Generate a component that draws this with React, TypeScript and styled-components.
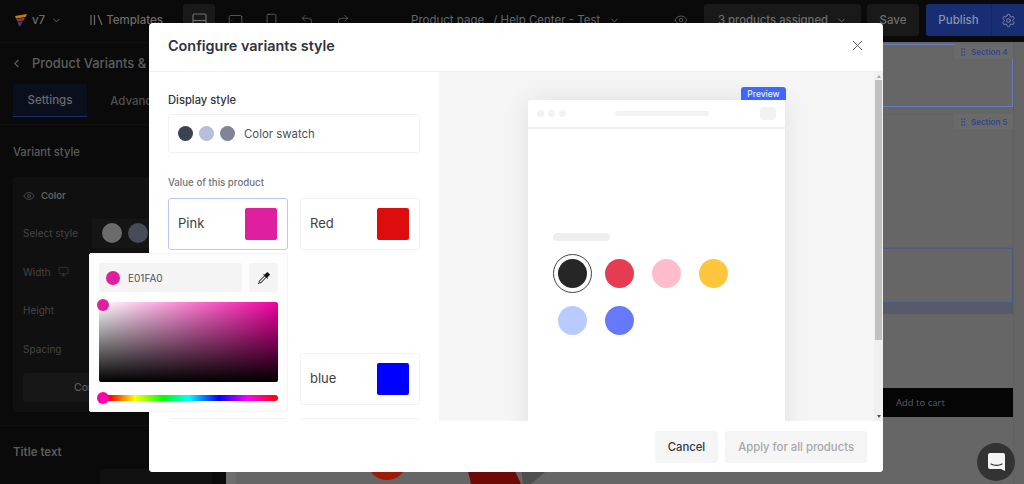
import React from "react";
import styled, { createGlobalStyle } from "styled-components";
import { ChevronDown, ChevronLeft, Eye, Monitor, Tablet, Smartphone, Undo2, Redo2, Settings, X, GripVertical } from "lucide-react";
import { BsEyedropper } from "react-icons/bs";

const Global = createGlobalStyle`
  html, body { margin: 0; padding: 0; width: 1024px; height: 484px; overflow: hidden; background: #0a0a0a; }
  body { font-family: Inter, "Liberation Sans", sans-serif; }
  * { box-sizing: border-box; }
`;

const Page = styled.div`
  position: relative;
  width: 1024px;
  height: 484px;
  display: flex;
  flex-direction: column;
  overflow: hidden;
  background: #666;
`;

/* ---------- dimmed editor behind the dialog ---------- */
const TopBar = styled.header`
  height: 42px;
  flex: none;
  background: #0a0a0a;
  display: flex;
  align-items: center;
  padding: 4px 0 6px;
  color: #6c6c6c;
  font-size: 11.5px;
  font-weight: 500;
  white-space: nowrap;
`;
const Logo = styled.svg`
  width: 14px;
  height: 14px;
  margin-left: 14px;
`;
const Version = styled.span`
  display: flex;
  align-items: center;
  gap: 6px;
  margin-left: 4px;
`;
const Templates = styled.span`
  display: flex;
  align-items: center;
  gap: 3px;
  margin-left: 28px;
`;
const DeviceIcon = styled.span<{ $on?: boolean }>`
  width: 32px;
  height: 32px;
  display: flex;
  align-items: center;
  justify-content: center;
  border-radius: 3px;
  background: ${(p) => (p.$on ? "#191919" : "transparent")};
`;
const Devices = styled.div`
  display: flex;
  gap: 4px;
  margin-left: 20px;
`;
const Breadcrumb = styled.span`
  display: flex;
  align-items: center;
  gap: 9px;
  margin-left: 52px;
  color: #5f6870;
  font-weight: 400;
  font-size: 11.5px;
`;
const PreviewEye = styled.span`
  margin-left: auto;
  margin-right: 16px;
  display: flex;
  align-items: center;
`;
const Assign = styled.div`
  width: 157px;
  height: 32px;
  background: #191919;
  border-radius: 3px;
  display: flex;
  align-items: center;
  justify-content: space-between;
  padding: 0 14px;
  font-size: 11.3px;
`;
const SaveBtn = styled.div`
  width: 52px;
  height: 32px;
  margin-left: 6px;
  background: #191919;
  border-radius: 3px;
  display: flex;
  align-items: center;
  justify-content: center;
`;
const PublishBtn = styled.div`
  width: 98px;
  height: 32px;
  margin-left: 7px;
  background: #182d72;
  border-radius: 3px 0 0 3px;
  display: flex;
  color: #8a93ad;
`;
const PublishLabel = styled.span`
  flex: 1;
  display: flex;
  align-items: center;
  justify-content: center;
  border-right: 1px solid #16286a;
`;
const PublishGear = styled.span`
  width: 32px;
  display: flex;
  align-items: center;
  justify-content: center;
  flex: none;
`;
const Body = styled.div`
  flex: 1;
  display: flex;
  min-height: 0;
`;
const Sidebar = styled.aside`
  width: 226px;
  flex: none;
  background: #0a0a0a;
  border-top: 1px solid #111;
  color: #5c5c5c;
  display: flex;
  flex-direction: column;
`;
const SideTitle = styled.div`
  height: 41px;
  flex: none;
  display: flex;
  align-items: center;
  gap: 9px;
  padding-left: 10px;
  font-size: 12.9px;
  font-weight: 500;
  color: #5f5f5f;
  white-space: nowrap;
  overflow: hidden;
`;
const Tabs = styled.div`
  height: 33px;
  flex: none;
  display: flex;
  margin: 0 0 7px;
  font-size: 11.5px;
  font-weight: 500;
  padding-left: 13px;
`;
const TabItem = styled.div<{ $on?: boolean }>`
  width: 74px;
  display: flex;
  align-items: center;
  justify-content: center;
  background: ${(p) => (p.$on ? "#0a0f1d" : "transparent")};
  border-bottom: ${(p) => (p.$on ? "1px solid #182d72" : "none")};
  color: ${(p) => (p.$on ? "#6c6c6c" : "#505050")};
  margin-right: 14px;
  flex: none;
`;
const SideHeading = styled.div`
  padding: 20px 13px 0;
  height: 53px;
  font-size: 11.2px;
  font-weight: 500;
  color: #5c5c5c;
  border-top: 1px solid #101010;
  flex: none;
`;
const Panel = styled.div`
  margin: 0 13px;
  height: 235px;
  flex: none;
  background: #101010;
  border-radius: 3px;
  padding: 0 10px;
  display: flex;
  flex-direction: column;
`;
const PanelHead = styled.div`
  height: 37px;
  flex: none;
  display: flex;
  align-items: center;
  gap: 6px;
  font-size: 9.5px;
  font-weight: 600;
  color: #626262;
`;
const PanelRow = styled.div`
  height: 38.5px;
  flex: none;
  display: flex;
  align-items: center;
  gap: 7px;
  font-size: 10px;
  color: #454545;
`;
const StylePick = styled.div`
  margin-left: 7px;
  width: 100px;
  height: 29px;
  background: #151515;
  display: flex;
  align-items: center;
  padding: 0 10px;
  gap: 6px;
`;
const Dot = styled.span<{ $c: string }>`
  width: 20px;
  height: 20px;
  border-radius: 50%;
  background: ${(p) => p.$c};
  flex: none;
`;
const ConfBtn = styled.div`
  margin-top: 5px;
  height: 29px;
  flex: none;
  background: #171717;
  border-radius: 3px;
  display: flex;
  align-items: center;
  padding-left: 51px;
  font-size: 10.5px;
  font-weight: 500;
  color: #5c5c5c;
`;
const SideHeading2 = styled.div`
  margin-top: 13px;
  border-top: 1px solid #111;
  padding: 19px 13px 0;
  font-size: 11.5px;
  font-weight: 600;
  color: #5c5c5c;
  flex: none;
`;
const SideInput = styled.div`
  margin: 10px 14px 0 100px;
  height: 20px;
  background: #111;
  border-radius: 2px;
  flex: none;
`;
const Canvas = styled.main`
  flex: 1;
  min-width: 0;
  position: relative;
  background: #666;
  border-left: 10px solid #6e6e6e;
  overflow: hidden;
`;
const Gutter = styled.div`
  position: absolute;
  top: 0;
  bottom: 0;
  right: 0;
  width: 11px;
  background: #646464;
  border-left: 1px solid #606060;
`;
const SectionBox = styled.div<{ $top: number; $h: number; $c: string }>`
  position: absolute;
  right: 11px;
  left: 0;
  top: ${(p) => p.$top}px;
  height: ${(p) => p.$h}px;
  border: 1px solid ${(p) => p.$c};
`;
const SectionTag = styled.div`
  position: absolute;
  right: -1px;
  top: -1px;
  width: 59px;
  height: 15px;
  background: #6a6a6a;
  color: #33458f;
  font-size: 8px;
  font-weight: 600;
  display: flex;
  align-items: center;
  gap: 3px;
  padding-left: 4px;
  white-space: nowrap;
`;
const Strip = styled.div`
  position: absolute;
  left: 0;
  right: 11px;
  top: 261px;
  height: 11px;
  background: #565a69;
`;
const CartBar = styled.div`
  position: absolute;
  left: 0;
  right: 11px;
  top: 346px;
  height: 29px;
  background: #050505;
  color: #5e5e5e;
  font-family: "Open Sans", sans-serif;
  font-size: 9.5px;
  display: flex;
  align-items: center;
  padding-left: 660px;
  white-space: nowrap;
`;
const RedBlob = styled.div`
  position: absolute;
  left: 131px;
  top: 398px;
  width: 40px;
  height: 40px;
  border-radius: 50%;
  background: #a01a08;
`;
const ProductArt = styled.svg`
  position: absolute;
  left: 225px;
  top: 425px;
  width: 110px;
  height: 17px;
`;

/* ---------- dialog ---------- */
const Dialog = styled.section`
  position: absolute;
  left: 149px;
  top: 23px;
  width: 734px;
  height: 449px;
  background: #fff;
  border-radius: 4px;
  display: flex;
  flex-direction: column;
  overflow: hidden;
`;
const DialogHead = styled.div`
  height: 49px;
  flex: none;
  display: flex;
  align-items: center;
  justify-content: space-between;
  padding: 0 17px 3px 19px;
  border-bottom: 1px solid #f0f0f0;
  color: #444;
`;
const DialogTitle = styled.h2`
  margin: 0;
  font-size: 14.4px;
  font-weight: 600;
  color: #30343c;
`;
const DialogMain = styled.div`
  flex: 1;
  min-height: 0;
  display: flex;
`;
const LeftPane = styled.div`
  width: 290px;
  flex: none;
  padding: 20.5px 19px 0;
  overflow: hidden;
  display: flex;
  flex-direction: column;
`;
const PaneLabel = styled.div`
  font-size: 11.2px;
  font-weight: 500;
  color: #30343c;
  line-height: 15px;
`;
const DisplayCard = styled.div`
  margin-top: 6.5px;
  height: 39px;
  border: 1px solid #f2f2f2;
  border-radius: 3px;
  display: flex;
  align-items: center;
  padding: 0 9px;
  gap: 6px;
  flex: none;
`;
const Swatch = styled.span<{ $c: string }>`
  width: 15px;
  height: 15px;
  border-radius: 50%;
  background: ${(p) => p.$c};
  flex: none;
`;
const DisplayText = styled.span`
  margin-left: 3px;
  font-size: 11.4px;
  color: #4d5159;
`;
const SubLabel = styled.div`
  margin-top: 23px;
  font-size: 9.7px;
  font-weight: 500;
  line-height: 14px;
  color: #6f737b;
`;
const ValueGrid = styled.div`
  margin-top: 8px;
  display: grid;
  grid-template-columns: 119.5px 119.5px;
  column-gap: 12.5px;
  row-gap: 13px;
  grid-template-rows: 52px 77px 52px 52px;
`;
const ValueCard = styled.div<{ $on?: boolean; $gap?: boolean }>`
  border: 1px solid ${(p) => (p.$on ? "#b8c8ff" : "#f3f3f3")};
  border-radius: 3px;
  display: flex;
  align-items: center;
  justify-content: space-between;
  padding: 0 9.5px 0 9px;
  font-size: 13px;
  color: #3b4048;
  visibility: ${(p) => (p.$gap ? "hidden" : "visible")};
`;
const ValueName = styled.span`
  margin-bottom: 2px;
`;
const ColorChip = styled.span<{ $c: string }>`
  width: 32px;
  height: 32px;
  border-radius: 2px;
  background: ${(p) => p.$c};
  flex: none;
`;
const RightPane = styled.div`
  flex: 1;
  min-width: 0;
  background: #f5f5f5;
  position: relative;
  overflow: hidden;
  display: flex;
  justify-content: center;
  padding: 28px 0 0 0;
`;
const ScrollTrack = styled.div`
  position: absolute;
  right: 0;
  top: 0;
  bottom: 0;
  width: 9px;
  background: #f0f0f0;
  display: flex;
  flex-direction: column;
  align-items: center;
`;
const ScrollArrow = styled.div<{ $down?: boolean }>`
  flex: none;
  width: 0;
  height: 0;
  margin: ${(p) => (p.$down ? "3px 0 3px" : "3px 0 2px")};
  border-left: 2.5px solid transparent;
  border-right: 2.5px solid transparent;
  ${(p) => (p.$down ? "border-top: 3px solid #555;" : "border-bottom: 3px solid #a8a8a8;")}
`;
const ScrollThumb = styled.div`
  width: 7px;
  height: 260px;
  flex: none;
  background: #c1c1c1;
`;
const ScrollFill = styled.div`
  flex: 1;
`;
const PreviewWrap = styled.div`
  position: relative;
  width: 257px;
  height: 400px;
  margin-left: -9px;
  flex: none;
`;
const PreviewBadge = styled.div`
  position: absolute;
  right: -1px;
  top: -13px;
  width: 45px;
  height: 13px;
  background: #3d67ff;
  border-radius: 3px 3px 0 0;
  color: #e8edff;
  font-size: 8.5px;
  font-weight: 500;
  display: flex;
  align-items: center;
  justify-content: center;
`;
const Browser = styled.div`
  width: 100%;
  height: 100%;
  background: #fff;
  box-shadow: 0 0 24px rgba(0, 0, 0, 0.09);
  border-radius: 2px 2px 0 0;
  display: flex;
  flex-direction: column;
`;
const BrowserBar = styled.div`
  height: 29px;
  flex: none;
  border-bottom: 2px solid #f0f0f0;
  display: flex;
  align-items: center;
  padding: 0 9px 0 9px;
  gap: 4px;
`;
const Light = styled.span`
  width: 7px;
  height: 7px;
  border-radius: 50%;
  background: #f2f2f2;
`;
const AddressBar = styled.span`
  width: 94px;
  height: 5px;
  border-radius: 3px;
  background: #f2f2f2;
  margin-left: 45px;
`;
const BarButton = styled.span`
  width: 16px;
  height: 13px;
  border-radius: 3px;
  background: #f2f2f2;
  margin-left: auto;
`;
const BrowserBody = styled.div`
  padding: 104px 0 0 25px;
`;
const Skeleton = styled.div`
  width: 57px;
  height: 8px;
  border-radius: 4px;
  background: #eeeeee;
`;
const OptionGrid = styled.div`
  margin-top: 18px;
  margin-left: 5px;
  display: grid;
  grid-template-columns: repeat(4, 29px);
  grid-auto-rows: 29px;
  column-gap: 18px;
  row-gap: 18px;
`;
const Option = styled.span<{ $c: string; $on?: boolean }>`
  width: 29px;
  height: 29px;
  border-radius: 50%;
  background: ${(p) => p.$c};
  position: relative;
  ${(p) =>
    p.$on
      ? `&::after { content: ""; position: absolute; inset: -5px; border-radius: 50%; border: 1.5px solid #444; }`
      : ""}
`;
const Footer = styled.div`
  height: 51px;
  flex: none;
  display: flex;
  justify-content: flex-end;
  align-items: center;
  gap: 7px;
  padding: 0 16px 0 0;
  background: #fff;
`;
const FootBtn = styled.div<{ $off?: boolean }>`
  height: 32px;
  padding: 0 ${(p) => (p.$off ? "13px" : "13px")};
  border-radius: 3px;
  background: #f5f5f5;
  display: flex;
  align-items: center;
  font-size: 11.3px;
  font-weight: 500;
  color: ${(p) => (p.$off ? "#a8a8a8" : "#33373e")};
`;

/* ---------- colour picker popover ---------- */
const Picker = styled.div`
  position: absolute;
  left: 89px;
  top: 253px;
  width: 199px;
  height: 159px;
  background: #fdfdfd;
  border: 1px solid #f4f4f4;
  border-radius: 2px;
  padding: 9px 9px 0;
  display: flex;
  flex-direction: column;
`;
const PickerTop = styled.div`
  display: flex;
  gap: 7px;
  height: 29px;
  flex: none;
`;
const HexField = styled.div`
  flex: 1;
  background: #f4f4f4;
  border-radius: 2px;
  display: flex;
  align-items: center;
  gap: 8px;
  padding-left: 7px;
  font-size: 10px;
  font-weight: 400;
  color: #4d5159;
`;
const HexDot = styled.span`
  width: 14px;
  height: 14px;
  border-radius: 50%;
  background: #e01fa0;
`;
const EyeDrop = styled.div`
  width: 29px;
  background: #f4f4f4;
  border-radius: 2px;
  display: flex;
  align-items: center;
  justify-content: center;
  color: #111;
`;
const Saturation = styled.div`
  position: relative;
  margin-top: 10px;
  height: 80px;
  flex: none;
  border-radius: 2px;
  background: linear-gradient(to top, #000, rgba(0, 0, 0, 0)),
    linear-gradient(to right, #fff, #f000a0);
`;
const Thumb = styled.span<{ $c: string }>`
  position: absolute;
  left: -2.5px;
  top: 50%;
  width: 12px;
  height: 12px;
  margin-top: -6px;
  border-radius: 50%;
  background: ${(p) => p.$c};
`;
const SatThumb = styled(Thumb)`
  top: 3px;
`;
const Hue = styled.div`
  position: relative;
  margin-top: 13px;
  height: 6px;
  flex: none;
  border-radius: 3px;
  background: linear-gradient(
    to right,
    #ff00a8 0%,
    #ff0000 6%,
    #ffff00 20%,
    #00ff00 36%,
    #00ffff 50%,
    #0000ff 67%,
    #ff00ff 83%,
    #ff0000 100%
  );
`;

/* ---------- chat launcher ---------- */
const Chat = styled.div`
  position: absolute;
  right: 9px;
  top: 443px;
  width: 38px;
  height: 38px;
  border-radius: 50%;
  background: #333;
  display: flex;
  align-items: center;
  justify-content: center;
`;

const values = [
  { name: "Pink", color: "#e01fa0", on: true },
  { name: "Red", color: "#dd0d0d" },
  { name: "", color: "", gap: true },
  { name: "", color: "", gap: true },
  { name: "", color: "", gap: true },
  { name: "blue", color: "#0000ff" },
  { name: "", color: "" },
  { name: "", color: "" },
];

const options = [
  { c: "#262626", on: true },
  { c: "#e63c52" },
  { c: "#ffbccd" },
  { c: "#ffc53d" },
  { c: "#b8caff" },
  { c: "#6679fb" },
];

export default function App() {
  return (
    <Page>
      <Global />
      <TopBar>
        <Logo viewBox="0 0 14 14">
          <path d="M1 3 L13 1 L11.5 4 L2 5.5 Z" fill="#b5850f" />
          <path d="M2.4 6 L11 4.8 L9.5 7.6 L3.2 8.5 Z" fill="#a83524" />
          <path d="M3.6 9 L8.8 8.2 L6.5 13 L5 13 Z" fill="#3a3c90" />
        </Logo>
        <Version>
          v7 <ChevronDown size={11} />
        </Version>
        <Templates>
          <svg width="13" height="12" viewBox="0 0 13 12" fill="none" stroke="#6c6c6c" strokeWidth="1.2">
            <path d="M1 1v10M4.5 1v10M8 1l4 10" />
          </svg>
          Templates
        </Templates>
        <Devices>
          <DeviceIcon $on>
            <svg width="15" height="15" viewBox="0 0 15 15" fill="none" stroke="#6c6c6c" strokeWidth="1.2">
              <rect x="1" y="1" width="13" height="13" rx="1.5" />
              <path d="M1 7.5h13" />
            </svg>
          </DeviceIcon>
          <DeviceIcon>
            <Tablet size={15} strokeWidth={1.2} style={{ transform: "rotate(90deg)" }} />
          </DeviceIcon>
          <DeviceIcon>
            <Smartphone size={15} strokeWidth={1.2} />
          </DeviceIcon>
          <DeviceIcon>
            <Undo2 size={14} strokeWidth={1.2} />
          </DeviceIcon>
          <DeviceIcon>
            <Redo2 size={14} strokeWidth={1.2} />
          </DeviceIcon>
        </Devices>
        <Breadcrumb>
          Product page
          <span>/ Help Center - Test</span>
          <ChevronDown size={11} />
        </Breadcrumb>
        <PreviewEye>
          <Eye size={14} strokeWidth={1.3} />
        </PreviewEye>
        <Assign>
          3 products assigned <ChevronDown size={11} />
        </Assign>
        <SaveBtn>Save</SaveBtn>
        <PublishBtn>
          <PublishLabel>Publish</PublishLabel>
          <PublishGear>
            <Settings size={15} strokeWidth={1.4} />
          </PublishGear>
        </PublishBtn>
      </TopBar>
      <Body>
        <Sidebar>
          <SideTitle>
            <ChevronLeft size={13} />
            Product Variants &amp; Swatches
          </SideTitle>
          <Tabs>
            <TabItem $on>Settings</TabItem>
            <TabItem>Advanced</TabItem>
          </Tabs>
          <SideHeading>Variant style</SideHeading>
          <Panel>
            <PanelHead>
              <Eye size={12} strokeWidth={1.3} />
              Color
            </PanelHead>
            <PanelRow>
              Select style
              <StylePick>
                <Dot $c="#6b6b6b" />
                <Dot $c="#484c58" />
              </StylePick>
            </PanelRow>
            <PanelRow>
              Width <Monitor size={11} strokeWidth={1.3} />
            </PanelRow>
            <PanelRow>Height</PanelRow>
            <PanelRow>Spacing</PanelRow>
            <ConfBtn>Configure</ConfBtn>
          </Panel>
          <SideHeading2>Title text</SideHeading2>
          <SideInput />
        </Sidebar>
        <Canvas>
          <SectionBox $top={2} $h={63} $c="#6a7cc0">
            <SectionTag>
              <GripVertical size={10} strokeWidth={2} />
              Section 4
            </SectionTag>
          </SectionBox>
          <SectionBox $top={72} $h={134} $c="#626262">
            <SectionTag>
              <GripVertical size={10} strokeWidth={2} />
              Section 5
            </SectionTag>
          </SectionBox>
          <SectionBox $top={206} $h={55} $c="#4d5a84" />
          <Strip />
          <CartBar>Add to cart</CartBar>
          <RedBlob />
          <ProductArt viewBox="0 0 110 17">
            <path d="M6 0 H52 L60 17 H10 Z" fill="#6e0a05" />
            <path d="M18 5 L26 0 H18 Z" fill="#8a8a8a" />
            <path d="M60 0 H90 L70 17 H62 Z" fill="#4f4f4f" />
          </ProductArt>
          <Gutter />
        </Canvas>
      </Body>

      <Dialog>
        <DialogHead>
          <DialogTitle>Configure variants style</DialogTitle>
          <X size={17} strokeWidth={1.2} />
        </DialogHead>
        <DialogMain>
          <LeftPane>
            <PaneLabel>Display style</PaneLabel>
            <DisplayCard>
              <Swatch $c="#3d4250" />
              <Swatch $c="#b6bfd9" />
              <Swatch $c="#7f8499" />
              <DisplayText>Color swatch</DisplayText>
            </DisplayCard>
            <SubLabel>Value of this product</SubLabel>
            <ValueGrid>
              {values.map((v, i) =>
                v.gap ? (
                  <ValueCard key={i} $gap />
                ) : (
                  <ValueCard key={i} $on={v.on}>
                    <ValueName>{v.name}</ValueName>
                    {v.color && <ColorChip $c={v.color} />}
                  </ValueCard>
                )
              )}
            </ValueGrid>
          </LeftPane>
          <RightPane>
            <PreviewWrap>
              <PreviewBadge>Preview</PreviewBadge>
              <Browser>
                <BrowserBar>
                  <Light />
                  <Light />
                  <Light />
                  <AddressBar />
                  <BarButton />
                </BrowserBar>
                <BrowserBody>
                  <Skeleton />
                  <OptionGrid>
                    {options.map((o) => (
                      <Option key={o.c} $c={o.c} $on={o.on} />
                    ))}
                  </OptionGrid>
                </BrowserBody>
              </Browser>
            </PreviewWrap>
            <ScrollTrack>
              <ScrollArrow />
              <ScrollThumb />
              <ScrollFill />
              <ScrollArrow $down />
            </ScrollTrack>
          </RightPane>
        </DialogMain>
        <Footer>
          <FootBtn>Cancel</FootBtn>
          <FootBtn $off>Apply for all products</FootBtn>
        </Footer>
      </Dialog>

      <Picker>
        <PickerTop>
          <HexField>
            <HexDot />
            E01FA0
          </HexField>
          <EyeDrop>
            <BsEyedropper size={12} />
          </EyeDrop>
        </PickerTop>
        <Saturation>
          <SatThumb $c="#e01fa0" />
        </Saturation>
        <Hue>
          <Thumb $c="#ff00a8" />
        </Hue>
      </Picker>

      <Chat>
        <svg width="19" height="20" viewBox="0 0 19 20">
          <path d="M3 1h13a2 2 0 0 1 2 2v16l-4-2H3a2 2 0 0 1-2-2V3a2 2 0 0 1 2-2z" fill="#f4f4f4" />
          <path d="M4 12c3 1.8 8 1.8 11 0" fill="none" stroke="#333" strokeWidth="1.2" strokeLinecap="round" />
        </svg>
      </Chat>
    </Page>
  );
}
